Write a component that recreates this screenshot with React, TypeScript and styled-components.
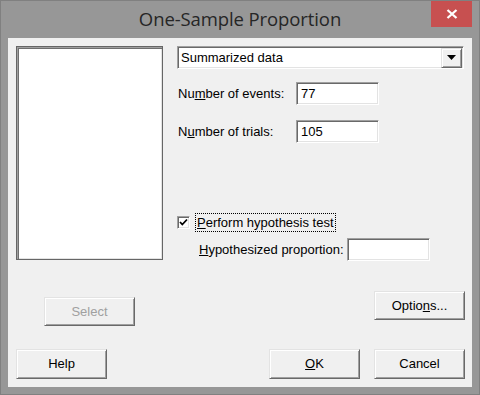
import React from "react";
import styled, { createGlobalStyle } from "styled-components";

const GlobalStyle = createGlobalStyle`
  html, body { margin: 0; padding: 0; background: #ffffff; }
  * { box-sizing: border-box; }
`;

const Window = styled.div`
  width: 480px;
  height: 395px;
  background: #979797;
  border: 1px solid #808080;
  padding: 0 7px 7px 7px;
  display: flex;
  flex-direction: column;
  font-family: "Liberation Sans", Arial, sans-serif;
  font-size: 13px;
  color: #000;
`;

const TitleBar = styled.div`
  height: 37px;
  display: grid;
  grid-template-columns: 1fr auto 1fr;
`;

const Title = styled.div`
  grid-column: 2;
  font-family: "Open Sans", "Noto Sans", sans-serif;
  font-size: 18.5px;
  color: #262626;
  line-height: 1;
  padding-top: 9px;
  letter-spacing: -0.1px;
`;

const CloseButton = styled.div`
  grid-column: 3;
  justify-self: end;
  width: 41px;
  height: 26px;
  background: #c75050;
  display: flex;
  align-items: center;
  justify-content: center;
`;

const Client = styled.div`
  flex: 1;
  background: #f0f0f0;
  padding: 8px 7px 0 8px;
  display: flex;
  flex-direction: column;
`;

const Top = styled.div`
  display: flex;
  gap: 14px;
`;

const ListBox = styled.div`
  width: 147px;
  height: 214px;
  border: 1px solid #666666;
  background: #ffffff;
  box-shadow: inset 1px 1px 0 #a0a0a0, inset 2px 2px 0 #6f6f6f,
    inset -1px -1px 0 #e3e3e3;
`;

const RightCol = styled.div`
  width: 287px;
  display: flex;
  flex-direction: column;
`;

const Sunken = styled.div`
  background: #ffffff;
  border-style: solid;
  border-width: 1px;
  border-color: #a0a0a0 #ffffff #ffffff #a0a0a0;
  box-shadow: inset 1px 1px 0 #696969, inset -1px -1px 0 #e3e3e3;
`;

const Combo = styled(Sunken)`
  height: 23px;
  display: flex;
  align-items: center;
  padding: 1px 1px 1px 3px;
`;

const ComboText = styled.span`
  flex: 1;
`;

const DropButton = styled.div`
  width: 21px;
  height: 20px;
  background: #f0f0f0;
  border-style: solid;
  border-width: 1px;
  border-color: #e3e3e3 #696969 #696969 #e3e3e3;
  box-shadow: inset 1px 1px 0 #ffffff, inset -1px -1px 0 #a0a0a0;
  display: flex;
  align-items: center;
  justify-content: center;
`;

const FieldRow = styled.div<{ $top: number }>`
  display: flex;
  align-items: center;
  margin-top: ${(p) => p.$top}px;
  padding-left: 1px;
`;

const FieldLabel = styled.span`
  width: 118px;
`;

const TextBox = styled(Sunken)`
  width: 83px;
  height: 23px;
  padding: 0 4px;
  display: flex;
  align-items: center;
`;

const CheckRow = styled.div`
  display: flex;
  align-items: center;
  margin-top: 70px;
  height: 19px;
`;

const CheckBox = styled.div`
  width: 13px;
  height: 13px;
  background: #ffffff;
  border-style: solid;
  border-width: 1px;
  border-color: #a0a0a0 #ffffff #ffffff #a0a0a0;
  box-shadow: inset 1px 1px 0 #696969, inset -1px -1px 0 #e3e3e3;
  display: flex;
  align-items: center;
  justify-content: center;
`;

const FocusLabel = styled.span`
  margin-left: 5px;
  height: 19px;
  border: 1px dotted #000;
  padding: 0 1px;
  display: flex;
  align-items: center;
`;

const HypRow = styled.div`
  display: flex;
  align-items: center;
  gap: 3px;
  margin-top: 6px;
  padding-left: 22px;
`;

const MidRow = styled.div`
  display: flex;
  justify-content: space-between;
  align-items: flex-start;
  margin-top: 30px;
  padding-left: 28px;
`;

const BottomRow = styled.div`
  display: flex;
  align-items: flex-start;
  margin-top: 23px;
  gap: 14px;
`;

const Spacer = styled.div`
  flex: 1;
`;

const Button = styled.div<{ $disabled?: boolean; $top?: number; $h?: number }>`
  width: 91px;
  height: ${(p) => p.$h ?? 29}px;
  margin-top: ${(p) => p.$top ?? 0}px;
  background: #f0f0f0;
  border-style: solid;
  border-width: 1px;
  border-color: #e3e3e3 #696969 #696969 #e3e3e3;
  box-shadow: inset 1px 1px 0 #ffffff, inset -1px -1px 0 #a0a0a0;
  display: flex;
  align-items: center;
  justify-content: center;
  color: ${(p) => (p.$disabled ? "#a0a0a0" : "#000")};
  padding-bottom: 1px;
`;

export default function App() {
  return (
    <>
      <GlobalStyle />
      <Window>
        <TitleBar>
          <Title>One-Sample Proportion</Title>
          <CloseButton>
            <svg width="12" height="10" viewBox="0 0 12 10">
              <path d="M1.5 1 L10.5 9 M10.5 1 L1.5 9" stroke="#ffffff" strokeWidth="2.3" />
            </svg>
          </CloseButton>
        </TitleBar>
        <Client>
          <Top>
            <ListBox />
            <RightCol>
              <Combo>
                <ComboText>Summarized data</ComboText>
                <DropButton>
                  <svg width="9" height="5" viewBox="0 0 9 5">
                    <path d="M0 0 H9 L4.5 5 Z" fill="#000" />
                  </svg>
                </DropButton>
              </Combo>
              <FieldRow $top={13}>
                <FieldLabel>
                  Nu<u>m</u>ber of events:
                </FieldLabel>
                <TextBox>77</TextBox>
              </FieldRow>
              <FieldRow $top={15}>
                <FieldLabel>
                  N<u>u</u>mber of trials:
                </FieldLabel>
                <TextBox>105</TextBox>
              </FieldRow>
              <CheckRow>
                <CheckBox>
                  <svg width="9" height="9" viewBox="0 0 9 9">
                    <path d="M1 4 L3.3 6.5 L8 1.5" stroke="#000" strokeWidth="1.8" fill="none" />
                  </svg>
                </CheckBox>
                <FocusLabel>
                  <span>
                    <u>P</u>erform hypothesis test
                  </span>
                </FocusLabel>
              </CheckRow>
              <HypRow>
                <span>
                  <u>H</u>ypothesized proportion:
                </span>
                <TextBox />
              </HypRow>
            </RightCol>
          </Top>
          <MidRow>
            <Button $disabled $top={6}>
              Select
            </Button>
            <Button>
              Optio<u>n</u>s...
            </Button>
          </MidRow>
          <BottomRow>
            <Button $h={30}>Help</Button>
            <Spacer />
            <Button $h={30}>
              <u>O</u>K
            </Button>
            <Button $h={30}>Cancel</Button>
          </BottomRow>
        </Client>
      </Window>
    </>
  );
}
